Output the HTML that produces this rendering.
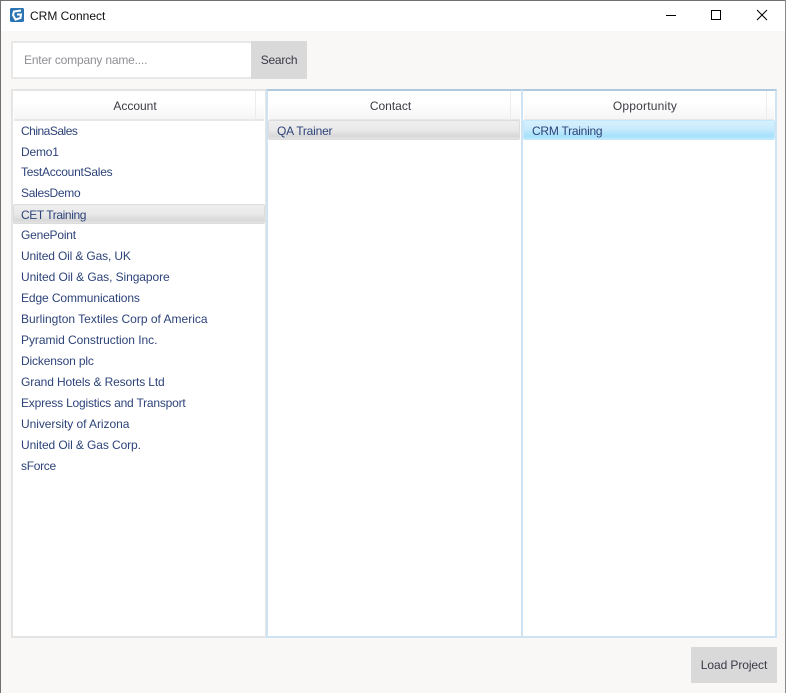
<!DOCTYPE html>
<html>
<head>
<meta charset="utf-8">
<style>
html,body{margin:0;padding:0;}
body{width:786px;height:693px;overflow:hidden;position:relative;background:#f9f8f6;font-family:"Liberation Sans",sans-serif;font-size:12px;color:#333;}
div{box-sizing:border-box;}
.abs{position:absolute;}
#title{left:0;top:0;width:786px;height:31px;background:#fff;}
#frameT{left:0;top:0;width:786px;height:1px;background:#707070;}
#frameL{left:0;top:0;width:1px;height:693px;background:#707070;}
#frameR{left:785px;top:0;width:1px;height:693px;background:#8a8a8a;}
#ttl{left:30px;top:8px;font-size:12px;line-height:16px;color:#111;}
#input{left:11px;top:41px;width:240px;height:38px;background:#fff;border:2px solid #e8e8e8;border-right:0;color:#8f8f96;line-height:34px;padding-left:11px;letter-spacing:-.19px;}
#btn{left:251px;top:41px;width:56px;height:38px;background:#d9d9d9;color:#3a3a48;text-align:center;line-height:38px;letter-spacing:-.25px;}
#load{left:691px;top:647px;width:86px;height:36px;background:#d9d9d9;color:#3a3a48;text-align:center;line-height:37px;white-space:nowrap;letter-spacing:-.08px;}
.panel{top:89px;height:549px;background:#fff;border:2px solid #e4e4e4;}
.blue{border-color:#cfe4f2;border-top-color:#aecade;}
.hd{position:absolute;left:1px;top:0;right:1px;height:30px;background:linear-gradient(#fff 0,#fff 40%,#f5f5f5 100%);border-bottom:2px solid #e8e8e8;text-align:center;line-height:30px;color:#3b3b44;padding-right:8px;}
.sep{position:absolute;top:0;width:1px;height:30px;background:#ececec;}
.row{position:absolute;left:8px;height:18px;line-height:18px;color:#2d4379;white-space:nowrap;}
.sel{position:absolute;left:0;right:0;height:20px;line-height:20px;color:#2d4379;padding-left:7px;border:1px solid #dcdcdc;border-radius:2px;}
.gray{background:linear-gradient(#efefef 0,#e9e9e9 50%,#d8d8d8 85%,#e4e4e4 100%);}
.cy{background:linear-gradient(#d6f0fd 0,#c8ebfd 45%,#a4e0fc 85%,#c0eafd 100%);border-color:#c4e8fb;}
</style>
</head>
<body>
<div class="abs" id="title"></div>
<div class="abs" id="frameT"></div>
<div class="abs" id="frameL"></div>
<div class="abs" id="frameR"></div>
<svg class="abs" style="left:10px;top:8px" width="14" height="14" viewBox="0 0 14 14">
<rect width="14" height="14" rx="1.5" fill="#2a74b3"/>
<path d="M11 2.5 L4 3.5 L3 7 L5.5 11.5 L10.5 10 L11 6.5 L7 6.5" fill="none" stroke="#fff" stroke-width="2"/>
</svg>
<div class="abs" id="ttl">CRM Connect</div>
<svg class="abs" style="left:660px;top:8px" width="115" height="16" viewBox="0 0 115 16">
<path d="M6 7.5H16" stroke="#000" stroke-width="1" fill="none"/>
<rect x="51.5" y="2.5" width="9" height="9" stroke="#000" stroke-width="1" fill="none"/>
<path d="M97 2L107 12M107 2L97 12" stroke="#000" stroke-width="1" fill="none"/>
</svg>
<div class="abs" id="input">Enter company name....</div>
<div class="abs" id="btn">Search</div>

<div class="abs panel" style="left:11px;width:256px;">
<div class="hd">Account</div>
<div class="sep" style="left:242px"></div>
<div class="row" style="top:31px;letter-spacing:-.5px">ChinaSales</div>
<div class="row" style="top:52px;letter-spacing:-.2px">Demo1</div>
<div class="row" style="top:72px;letter-spacing:-.25px">TestAccountSales</div>
<div class="row" style="top:93px;letter-spacing:-.3px">SalesDemo</div>
<div class="sel gray" style="top:113px;letter-spacing:-.4px">CET Training</div>
<div class="row" style="top:135px;letter-spacing:-.2px">GenePoint</div>
<div class="row" style="top:156px;letter-spacing:-.15px">United Oil &amp; Gas, UK</div>
<div class="row" style="top:177px;letter-spacing:-.08px">United Oil &amp; Gas, Singapore</div>
<div class="row" style="top:198px;letter-spacing:-.1px">Edge Communications</div>
<div class="row" style="top:219px">Burlington Textiles Corp of America</div>
<div class="row" style="top:240px;letter-spacing:-.04px">Pyramid Construction Inc.</div>
<div class="row" style="top:261px;letter-spacing:-.15px">Dickenson plc</div>
<div class="row" style="top:282px;letter-spacing:-.12px">Grand Hotels &amp; Resorts Ltd</div>
<div class="row" style="top:303px;letter-spacing:-.2px">Express Logistics and Transport</div>
<div class="row" style="top:324px;letter-spacing:-.05px">University of Arizona</div>
<div class="row" style="top:345px;letter-spacing:-.1px">United Oil &amp; Gas Corp.</div>
<div class="row" style="top:366px;letter-spacing:-.3px">sForce</div>
</div>

<div class="abs panel blue" style="left:266px;width:257px;">
<div class="hd">Contact</div>
<div class="sep" style="left:242px"></div>
<div class="sel gray" style="top:29px;left:0;right:1px;padding-left:8px;letter-spacing:-.2px">QA Trainer</div>
</div>

<div class="abs panel blue" style="left:521px;width:256px;">
<div class="hd" style="letter-spacing:.2px">Opportunity</div>
<div class="sep" style="left:243px"></div>
<div class="sel cy" style="top:29px;left:0;right:0;padding-left:8px;letter-spacing:-.25px">CRM Training</div>
</div>

<div class="abs" id="load">Load Project</div>
</body>
</html>
